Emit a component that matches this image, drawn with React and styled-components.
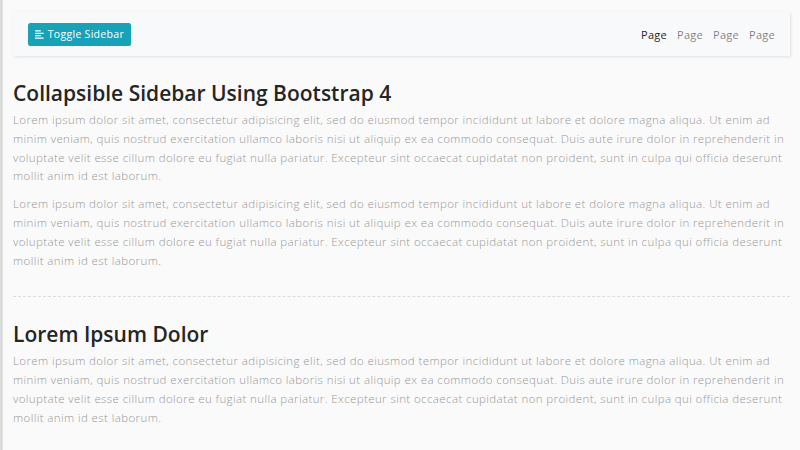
import styled, { createGlobalStyle } from "styled-components";

const GlobalStyle = createGlobalStyle`
  html, body {
    margin: 0;
    padding: 0;
  }
  body {
    font-family: 'Open Sans', 'Liberation Sans', sans-serif;
    background: #fafafa;
    color: #212529;
  }
`;

const lorem =
  "Lorem ipsum dolor sit amet, consectetur adipisicing elit, sed do eiusmod tempor incididunt ut labore et dolore magna aliqua. Ut enim ad minim veniam, quis nostrud exercitation ullamco laboris nisi ut aliquip ex ea commodo consequat. Duis aute irure dolor in reprehenderit in voluptate velit esse cillum dolore eu fugiat nulla pariatur. Excepteur sint occaecat cupidatat non proident, sunt in culpa qui officia deserunt mollit anim id est laborum.";

function AlignLeftIcon() {
  return (
    <svg width="9" height="9" viewBox="0 0 448 448" fill="currentColor">
      <rect x="0" y="0" width="300" height="64" rx="16" />
      <rect x="0" y="128" width="448" height="64" rx="16" />
      <rect x="0" y="256" width="300" height="64" rx="16" />
      <rect x="0" y="384" width="448" height="64" rx="16" />
    </svg>
  );
}

export default function App() {
  const pages = ["Page", "Page", "Page", "Page"];
  return (
    <Wrapper>
      <GlobalStyle />
      <SidebarEdge />
      <Content>
        <Navbar>
          <ToggleButton>
            <AlignLeftIcon />
            <span>Toggle Sidebar</span>
          </ToggleButton>
          <NavLinks>
            {pages.map((p, i) => (
              <NavLink key={i} $active={i === 0}>{p}</NavLink>
            ))}
          </NavLinks>
        </Navbar>

        <Title>Collapsible Sidebar Using Bootstrap 4</Title>
        <Text>{lorem}</Text>
        <Text>{lorem}</Text>

        <Line />

        <Title>Lorem Ipsum Dolor</Title>
        <Text>{lorem}</Text>

        <Line />
      </Content>
    </Wrapper>
  );
}

const Wrapper = styled.div`
  display: flex;
  width: 800px;
  height: 450px;
  overflow: hidden;
  background: #fafafa;
`;

const SidebarEdge = styled.div`
  flex: 0 0 3px;
  background: linear-gradient(to right, #e4e4e4, #d2d2d2 40%, #ececec);
`;

const Content = styled.div`
  flex: 1;
  padding: 12px 10px 0 10px;
  min-width: 0;
`;

const Navbar = styled.nav`
  display: flex;
  align-items: center;
  justify-content: space-between;
  height: 44px;
  box-sizing: border-box;
  padding: 0 15px;
  background: #f8f9fa;
  box-shadow: 1px 1px 3px rgba(0, 0, 0, 0.1);
  margin-bottom: 25px;
`;

const ToggleButton = styled.button`
  display: flex;
  align-items: center;
  gap: 4px;
  height: 23px;
  width: 103px;
  padding: 0 7px;
  border: none;
  border-radius: 2.5px;
  background: #17a2b8;
  color: #fff;
  font-family: inherit;
  font-size: 10.5px;
  letter-spacing: 0.3px;
  white-space: nowrap;
  cursor: pointer;
`;

const NavLinks = styled.div`
  display: flex;
  gap: 10px;
`;

const NavLink = styled.a`
  font-size: 11px;
  letter-spacing: 0.3px;
  color: ${(p) => (p.$active ? "rgba(0,0,0,0.9)" : "rgba(0,0,0,0.5)")};
  text-decoration: none;
  width: 26px;
  text-align: center;
`;

const Title = styled.h2`
  margin: 0 0 6px;
  font-size: 21px;
  font-weight: 600;
  letter-spacing: 0;
  line-height: 24px;
  color: #252525;
`;

const Text = styled.p`
  margin: 0 0 9px;
  font-size: 11.5px;
  font-weight: 300;
  letter-spacing: 0.4px;
  line-height: 18.8px;
  color: #999;
`;

const Line = styled.div`
  width: 100%;
  height: 1px;
  border-bottom: 1px dashed #ddd;
  margin: 25px 0;
`;
